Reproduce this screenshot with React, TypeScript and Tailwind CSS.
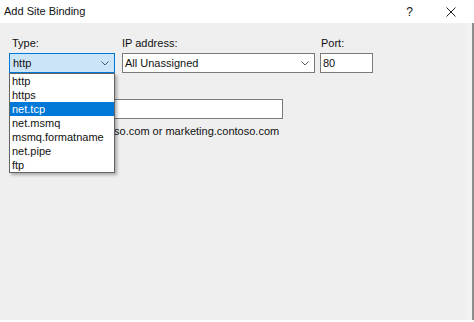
import React from "react";

const Chevron = () => (
  <svg width="8" height="5" viewBox="0 0 8 5" className="shrink-0">
    <path d="M0.5 0.5 L4 4 L7.5 0.5" fill="none" stroke="#5a5a5a" strokeWidth="1" />
  </svg>
);

export default function App() {
  const items = ["http", "https", "net.tcp", "net.msmq", "msmq.formatname", "net.pipe", "ftp"];
  return (
    <div
      className="relative w-[474px] h-[322px] overflow-hidden bg-white text-[11px] text-[#111]"
      style={{ fontFamily: '"Liberation Sans", Arial, sans-serif' }}
    >
      <div className="flex h-[23px] items-center bg-white pl-[4px]">
        <span className="text-[11px] leading-none">Add Site Binding</span>
        <span className="ml-auto mr-[33px] text-[12px] leading-none">?</span>
        <svg width="10" height="10" viewBox="0 0 10 10" className="mr-[18px]">
          <path d="M0.5 0.5 L9.5 9.5 M9.5 0.5 L0.5 9.5" stroke="#222" strokeWidth="1" />
        </svg>
      </div>
      <div className="flex h-[297px] w-[474px]">
        <div className="relative h-full w-[465px] bg-[#efefef] pt-[13px] pl-[9px]">
          <div className="flex">
            <div className="flex w-[106px] flex-col">
              <span className="ml-[3px] h-[14px] leading-[14px]">Type:</span>
              <div className="mt-[3px] flex h-[20px] items-center justify-between border border-[#0078d7] bg-[#cce4f7] pl-[3px] pr-[5px]">
                <span>http</span>
                <Chevron />
              </div>
            </div>
            <div className="ml-[7px] flex w-[193px] flex-col">
              <span className="h-[14px] leading-[14px]">IP address:</span>
              <div className="mt-[3px] flex h-[20px] items-center justify-between border border-[#7a7a7a] bg-white pl-[2px] pr-[5px]">
                <span>All Unassigned</span>
                <Chevron />
              </div>
            </div>
            <div className="ml-[5px] flex w-[53px] flex-col">
              <span className="ml-[1px] h-[14px] leading-[14px]">Port:</span>
              <div className="mt-[3px] flex h-[20px] items-center border border-[#7a7a7a] bg-white pl-[2px]">
                <span>80</span>
              </div>
            </div>
          </div>
          <div className="mt-[12px] flex flex-col">
            <span className="ml-[3px] h-[14px] leading-[14px]">Host name:</span>
            <div className="h-[20px] w-[274px] border border-[#7a7a7a] bg-white" />
            <span className="ml-[3px] mt-[5px] h-[14px] leading-[14px]">
              Example: www.contoso.com or marketing.contoso.com
            </span>
          </div>
          <div className="absolute left-[9px] top-[50px] flex w-[106px] flex-col border border-[#646464] bg-white shadow-[2px_2px_3px_rgba(0,0,0,0.3)]">
            {items.map((it) => (
              <div
                key={it}
                className={
                  it === "net.tcp"
                    ? "h-[14px] bg-[#0078d7] pl-[2px] leading-[14px] text-white"
                    : "h-[14px] pl-[2px] leading-[14px]"
                }
              >
                {it}
              </div>
            ))}
          </div>
        </div>
        <div className="h-full w-[7px] bg-[#f2f2f2]" />
        <div className="h-full w-[2px] bg-[#8c8c8c]" />
      </div>
      <div className="h-[2px] w-full bg-white" />
    </div>
  );
}
